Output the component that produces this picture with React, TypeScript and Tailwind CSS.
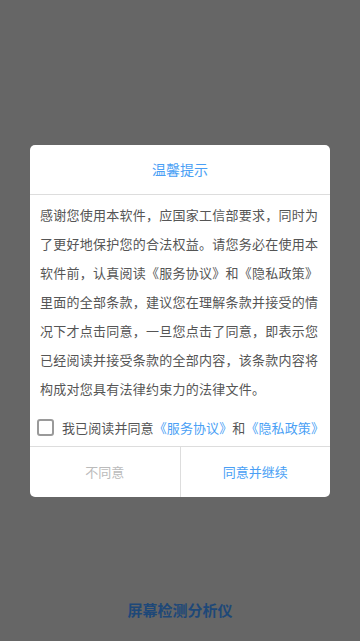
export default function App() {
  const font = { fontFamily: '"Noto Sans CJK SC", "Noto Sans", sans-serif' };
  return (
    <div className="relative w-[360px] h-[641px] bg-[#666666] overflow-hidden" style={font}>
      <div className="flex h-full flex-col items-center justify-end pb-[20px]">
        <div className="text-[15px] font-bold text-[#1e4878] leading-[22px]">屏幕检测分析仪</div>
      </div>

      <div className="absolute inset-0 flex items-center justify-center">
        <div className="w-[300px] bg-white rounded-[5px] overflow-hidden">
          <div className="h-[50px] flex items-center justify-center text-[14px] text-[#4a9ff5] border-b border-[#dddddd]">
            温馨提示
          </div>
          <p className="px-[10px] pt-[5px] text-[13px] leading-[29px] tracking-[0.25px] text-[#555555]">
            感谢您使用本软件，应国家工信部要求，同时为了更好地保护您的合法权益。请您务必在使用本软件前，认真阅读《服务协议》和《隐私政策》里面的全部条款，建议您在理解条款并接受的情况下才点击同意，一旦您点击了同意，即表示您已经阅读并接受条款的全部内容，该条款内容将构成对您具有法律约束力的法律文件。
          </p>
          <div className="flex items-center h-[43px] pl-[7px] pt-[7px]">
            <span className="w-[17px] h-[17px] border-2 border-[#9a9a9a] rounded-[3px] shrink-0" />
            <span className="ml-[8px] text-[13px] tracking-[0.1px] text-[#555555] whitespace-nowrap">
              我已阅读并同意<span className="text-[#4a9ff5]">《服务协议》</span>和<span className="text-[#4a9ff5]">《隐私政策》</span>
            </span>
          </div>
          <div className="flex h-[51px] border-t border-[#dddddd] text-[13px]">
            <div className="flex-1 flex items-center justify-center text-[#bbbbbb] border-r border-[#dddddd]">不同意</div>
            <div className="flex-1 flex items-center justify-center text-[#4a9ff5]">同意并继续</div>
          </div>
        </div>
      </div>
    </div>
  );
}
